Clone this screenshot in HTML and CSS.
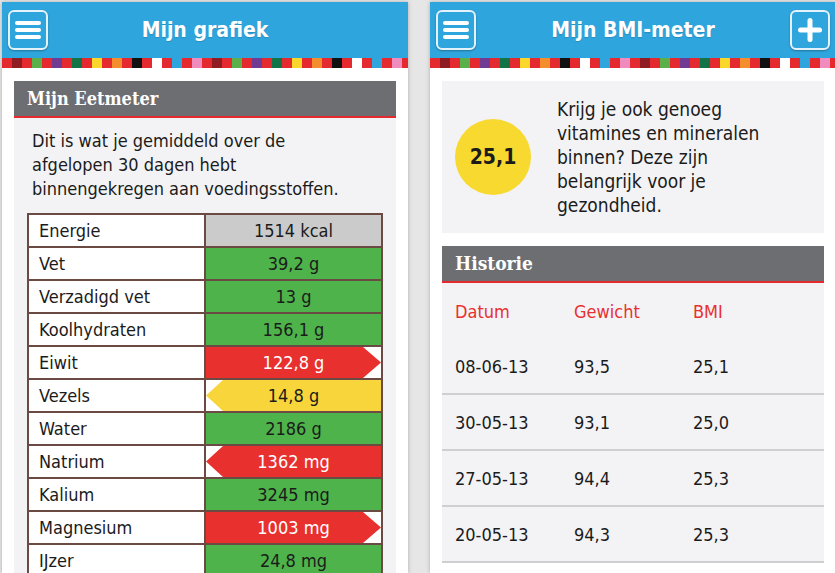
FILE: index.html
```html
<!DOCTYPE html>
<html lang="nl">
<head>
  <meta charset="UTF-8">
  <title>Mijn grafiek / Mijn BMI-meter</title>
<link rel="stylesheet" href="styles.css">
</head>
<body>
  <div class="screens">

    <section class="phone">
      <header class="topbar">
        <button class="icon-btn" aria-label="Menu">
          <svg width="36" height="36" viewBox="0 0 36 36">
            <rect x="5" y="9" width="26" height="4" rx="2" fill="#fff"/>
            <rect x="5" y="16" width="26" height="4" rx="2" fill="#fff"/>
            <rect x="5" y="23" width="26" height="4" rx="2" fill="#fff"/>
          </svg>
        </button>
        <h1 class="topbar-title">Mijn grafiek</h1>
        <span></span>
      </header>
      <div class="stripe"></div>

      <div class="content">
        <h2 class="block-title">Mijn Eetmeter</h2>
        <div class="block-body">
          <p class="intro">Dit is wat je gemiddeld over de afgelopen 30 dagen hebt binnengekregen aan voedingsstoffen.</p>
          <table class="meter">
            <tr><td>Energie</td><td class="val"><div class="bar grey">1514 kcal</div></td></tr>
            <tr><td>Vet</td><td class="val"><div class="bar green">39,2 g</div></td></tr>
            <tr><td>Verzadigd vet</td><td class="val"><div class="bar green">13 g</div></td></tr>
            <tr><td>Koolhydraten</td><td class="val"><div class="bar green">156,1 g</div></td></tr>
            <tr><td>Eiwit</td><td class="val"><div class="bar red up">122,8 g</div></td></tr>
            <tr><td>Vezels</td><td class="val"><div class="bar yellow down">14,8 g</div></td></tr>
            <tr><td>Water</td><td class="val"><div class="bar green">2186 g</div></td></tr>
            <tr><td>Natrium</td><td class="val"><div class="bar red down">1362 mg</div></td></tr>
            <tr><td>Kalium</td><td class="val"><div class="bar green">3245 mg</div></td></tr>
            <tr><td>Magnesium</td><td class="val"><div class="bar red up">1003 mg</div></td></tr>
            <tr><td>IJzer</td><td class="val"><div class="bar green">24,8 mg</div></td></tr>
          </table>
        </div>
      </div>
    </section>

    <section class="phone">
      <header class="topbar">
        <button class="icon-btn" aria-label="Menu">
          <svg width="36" height="36" viewBox="0 0 36 36">
            <rect x="5" y="9" width="26" height="4" rx="2" fill="#fff"/>
            <rect x="5" y="16" width="26" height="4" rx="2" fill="#fff"/>
            <rect x="5" y="23" width="26" height="4" rx="2" fill="#fff"/>
          </svg>
        </button>
        <h1 class="topbar-title">Mijn BMI-meter</h1>
        <button class="icon-btn" aria-label="Toevoegen">
          <svg width="36" height="36" viewBox="0 0 36 36">
            <rect x="15.5" y="6" width="5" height="24" rx="2.5" fill="#fff"/>
            <rect x="6" y="15.5" width="24" height="5" rx="2.5" fill="#fff"/>
          </svg>
        </button>
      </header>
      <div class="stripe"></div>

      <div class="content">
        <div class="bmi-card">
          <div class="bmi-badge">25,1</div>
          <p class="bmi-text">Krijg je ook genoeg vitamines en mineralen binnen? Deze zijn belangrijk voor je gezondheid.</p>
        </div>

        <h2 class="block-title history-title">Historie</h2>
        <div class="history">
          <div class="hist-row hist-head"><span>Datum</span><span>Gewicht</span><span>BMI</span></div>
          <div class="hist-row"><span>08-06-13</span><span>93,5</span><span>25,1</span></div>
          <div class="hist-row"><span>30-05-13</span><span>93,1</span><span>25,0</span></div>
          <div class="hist-row"><span>27-05-13</span><span>94,4</span><span>25,3</span></div>
          <div class="hist-row"><span>20-05-13</span><span>94,3</span><span>25,3</span></div>
        </div>
      </div>
    </section>

  </div>
</body>
</html>
```

FILE: styles.css
```css
html, body {
  margin: 0;
  padding: 0;
  height: 100%;
  overflow: hidden;
  background: #e6e6e7;
  font-family: "DejaVu Sans Condensed", "DejaVu Sans", sans-serif;
  font-stretch: condensed;
  color: #1b1b1b;
}

.screens {
  display: flex;
  gap: 22px;
  padding: 2px 0 0 2px;
  width: 860px;
}

.phone {
  width: 406px;
  height: 571px;
  overflow: hidden;
  background: #fff;
  box-shadow: 0 0 4px rgba(0, 0, 0, 0.25);
  flex-shrink: 0;
}

/* blauwe kopbalk */
.topbar {
  height: 56px;
  background: #2fa5dd;
  display: grid;
  grid-template-columns: 40px 1fr 40px;
  align-items: center;
  padding: 0 6px;
}

.topbar-title {
  margin: 0;
  text-align: center;
  color: #fff;
  font-size: 21px;
  font-weight: bold;
  text-shadow: 0 1px 1px rgba(0, 0, 0, 0.15);
}

.icon-btn {
  width: 40px;
  height: 40px;
  padding: 0;
  border: 2px solid #e4f3fb;
  border-radius: 6px;
  background: #2fa5dd;
  box-shadow: 0 1px 2px rgba(0, 0, 0, 0.3);
  display: flex;
  align-items: center;
  justify-content: center;
}

.icon-btn svg {
  display: block;
}

/* gekleurde blokjesrand */
.stripe {
  height: 10px;
  background: linear-gradient(to right,
    #e42a2f 0 10px, #8e1c22 10px 20px, #e42a2f 20px 30px, #5bb04a 30px 40px,
    #e42a2f 40px 50px, #6f3b93 50px 60px, #e42a2f 60px 70px, #127446 70px 80px,
    #e42a2f 80px 90px, #fbd72b 90px 100px, #e42a2f 100px 110px, #f48e2c 110px 120px,
    #e42a2f 120px 130px, #111 130px 140px, #e42a2f 140px 150px, #fff 150px 160px,
    #e42a2f 160px 170px, #2fa5dd 170px 180px, #e42a2f 180px 190px, #ef8bbd 190px 200px);
  background-size: 200px 10px;
}

.content {
  padding: 13px 12px 0;
}

.block-title {
  margin: 0;
  height: 35px;
  line-height: 35px;
  padding-left: 13px;
  background: #6d6e71;
  border-bottom: 2px solid #e42a2f;
  color: #fff;
  font-family: "DejaVu Serif", serif;
  font-stretch: condensed;
  font-size: 18px;
  font-weight: bold;
}

.history-title {
  font-size: 19px;
}

.block-body {
  background: #f3f3f5;
  padding: 11px 13px 0;
}

.intro {
  margin: 0 5px 12px;
  width: 325px;
  font-size: 18px;
  line-height: 24px;
}

/* eetmeter tabel */
.meter {
  width: 100%;
  border-collapse: collapse;
  border: 2px solid #5f403b;
  background: #fff;
  font-size: 18px;
}

.meter td {
  width: 50%;
  height: 31px;
  padding: 0 0 0 10px;
  border: 2px solid #6b4a44;
}

.meter td.val {
  padding: 0;
  background: #fff;
}

.bar {
  height: 31px;
  line-height: 31px;
  text-align: center;
}

.bar.green { background: #4eb34a; }
.bar.grey { background: #cbcbcc; }
.bar.red { background: #e8312f; color: #fff; }
.bar.yellow { background: #f8d53a; }

.bar.up {
  clip-path: polygon(0 0, calc(100% - 18px) 0, 100% 50%, calc(100% - 18px) 100%, 0 100%);
}

.bar.down {
  clip-path: polygon(17px 0, 100% 0, 100% 100%, 17px 100%, 0 50%);
}

/* BMI kaart */
.bmi-card {
  background: #f3f3f5;
  height: 152px;
  display: flex;
  align-items: center;
  gap: 26px;
  padding-left: 13px;
  margin-bottom: 13px;
}

.bmi-badge {
  width: 76px;
  height: 76px;
  border-radius: 50%;
  background: #f7d92f;
  flex-shrink: 0;
  display: flex;
  align-items: center;
  justify-content: center;
  font-size: 21px;
  font-weight: bold;
}

.bmi-text {
  margin: 0;
  width: 215px;
  font-size: 19px;
  line-height: 24px;
}

.history {
  background: #f3f3f5;
}

.hist-row {
  display: grid;
  grid-template-columns: 119px 119px 1fr;
  align-items: center;
  height: 54px;
  padding-left: 13px;
  border-bottom: 2px solid #cfcfd1;
  font-size: 18px;
}

.hist-row.hist-head {
  height: 56px;
  border-bottom: none;
  color: #e8302f;
}
```
